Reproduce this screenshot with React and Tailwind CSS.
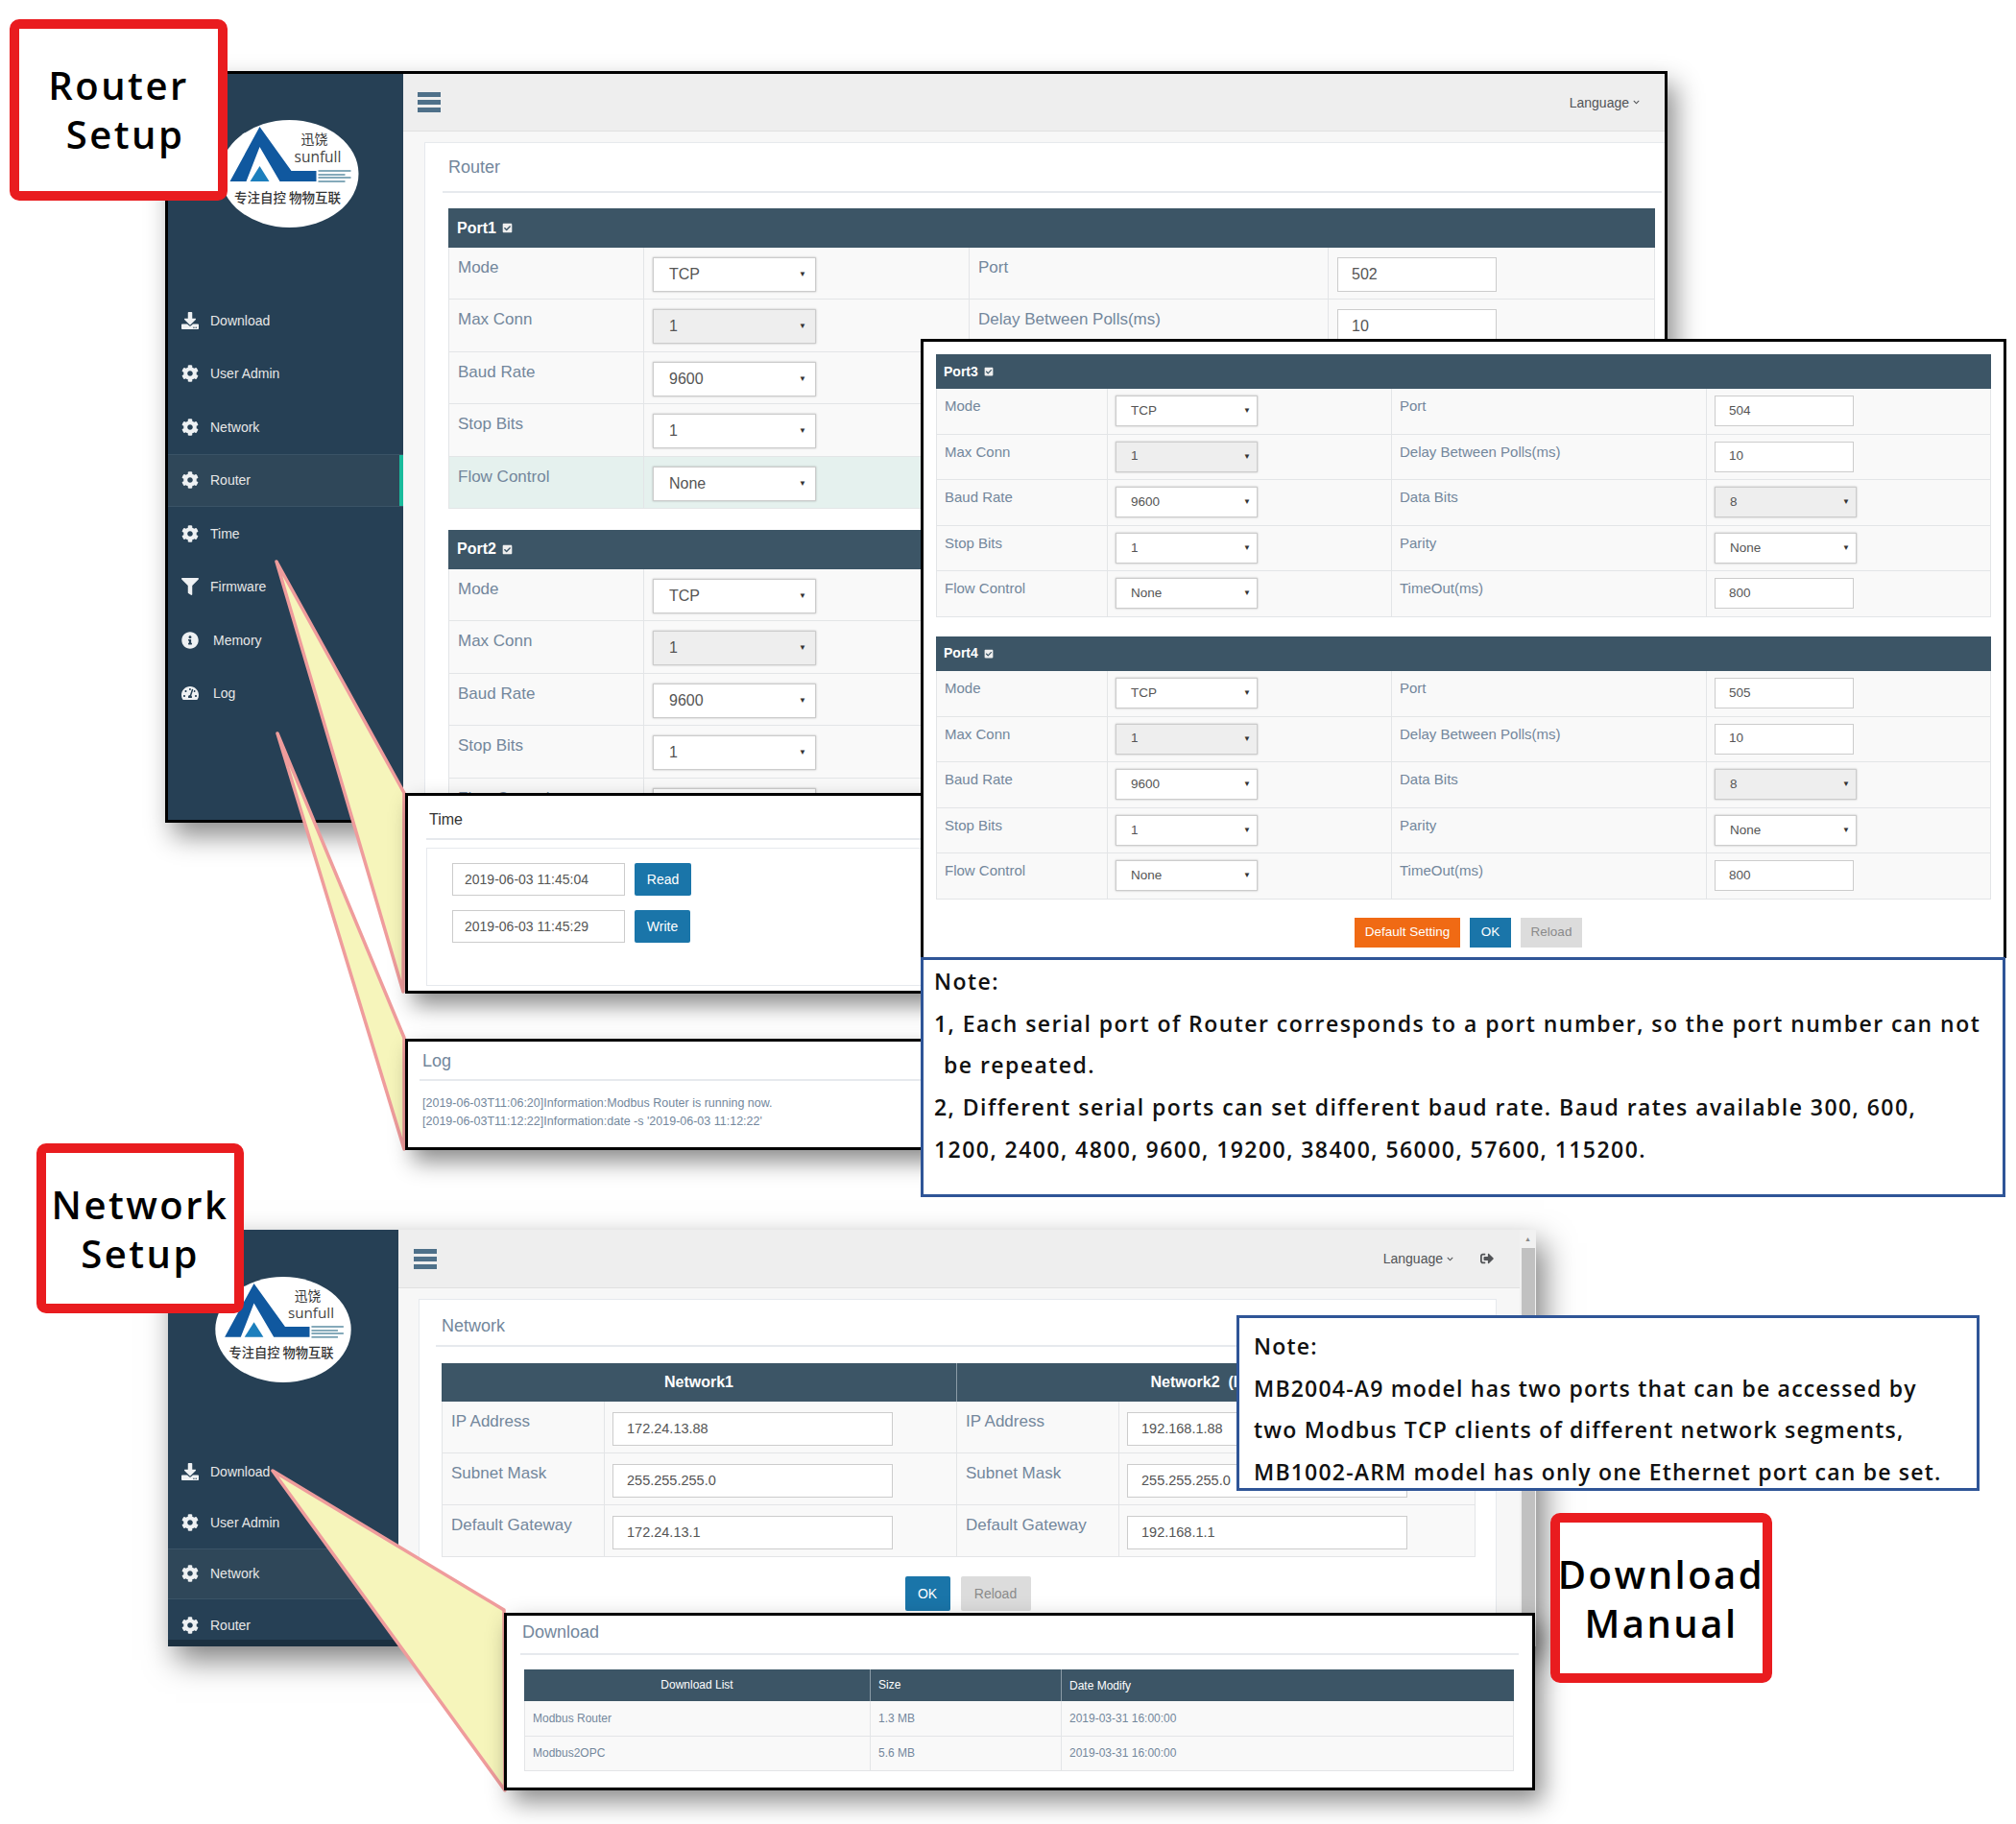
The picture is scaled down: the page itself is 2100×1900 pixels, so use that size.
import React from 'react';
import { FaBars, FaCheckSquare, FaChevronDown, FaCog, FaDownload, FaFilter, FaInfoCircle, FaSignOutAlt, FaTachometerAlt } from 'react-icons/fa';

const Logo = ({ className }) => (
  <svg viewBox="0 0 144 112" className={className}>
    <ellipse cx="72" cy="56" rx="72" ry="56" fill="#fff" />
    <polygon points="41,7 10,64 27,64 41,28 62,64 100,64 100,53 74,53" fill="#10589f" />
    <polygon points="41,48 31,64 51,64" fill="#1c7fbd" />
    <g stroke="#5d8ea3" strokeWidth="1.5">
      <line x1="102" y1="53" x2="136" y2="53" />
      <line x1="102" y1="57" x2="130" y2="57" />
      <line x1="102" y1="60" x2="136" y2="60" />
      <line x1="102" y1="64" x2="130" y2="64" />
    </g>
    <text x="98" y="25" textAnchor="middle" fontSize="14" fill="#333" style={{ fontFamily: '"Noto Sans CJK SC", serif' }}>迅饶</text>
    <text x="77" y="44" fontSize="15.5" fill="#444" style={{ fontFamily: '"Open Sans", sans-serif' }}>sunfull</text>
    <text x="70" y="86" textAnchor="middle" fontSize="13.5" fontWeight="500" fill="#333" style={{ fontFamily: '"Noto Sans CJK SC", sans-serif' }}>专注自控 物物互联</text>
  </svg>
);

const Hamburger = () => (
  <div className="flex flex-col gap-[3px] w-[24px]">
    <div className="h-[5px] bg-[#4e7089]" />
    <div className="h-[5px] bg-[#4e7089]" />
    <div className="h-[5px] bg-[#4e7089]" />
  </div>
);

const NavItem = ({ icon: Icon, children, active, tall, shift }) => (
  <div className={`flex items-center text-sm text-[#e7e7e7] relative ${tall ? 'h-[55.5px]' : 'h-[53.3px]'} ${active ? 'bg-[#2f4759] border-y border-[#3a5366]' : ''}`}>
    <div className="w-[44px] pl-[14px] flex items-center shrink-0">
      <Icon size={18} className="text-[#eef1f3]" />
    </div>
    <span className={shift ? 'ml-[3px]' : ''}>{children}</span>
    {active && tall && <div className="absolute right-0 top-0 bottom-0 w-[4px] bg-[#1abb9c]" />}
  </div>
);

const Callout = ({ points, className }) => (
  <svg className={`absolute left-0 top-0 ${className}`} width="2100" height="1900" viewBox="0 0 2100 1900">
    <polygon points={points} fill="#f6f5bb" stroke="#ef9c9c" strokeWidth="3.5" strokeLinejoin="round" />
  </svg>
);

const Label = ({ className, children }) => (
  <div className={`absolute bg-white border-[10px] border-[#e91c1f] rounded-[10px] flex flex-col items-center justify-center text-black font-semibold leading-[51px] text-[40px] tracking-[2.5px] ${className}`} style={{ fontFamily: '"Open Sans", sans-serif' }}>
    {children}
  </div>
);

const Select = ({ value, disabled, big }) => (
  <div className={`flex items-center justify-between border border-[#ccc] ${disabled ? 'bg-[#eee]' : 'bg-white'} ${big ? 'w-[170px] h-[36px] pl-[16px] pr-[9px] text-[16px] shadow-[0_0_2px_rgba(0,0,0,.25)]' : 'w-[148px] h-[32px] pl-[15px] pr-[6px] text-[13.5px] shadow-[0_0_2px_rgba(0,0,0,.25)]'} text-[#555]`}>
    <span>{value}</span>
    <span className="text-[8px] text-[#333]">▼</span>
  </div>
);

const Input = ({ value, big, className }) => (
  <div className={`flex items-center border border-[#ccc] bg-white text-[#555] ${big ? 'w-[166px] h-[36px] pl-[14px] text-[16px]' : 'w-[145px] h-[32px] pl-[14px] text-[13.5px]'} ${className || ''}`}>
    {value}
  </div>
);

const PortTable = ({ name, port, big, highlight }) => {
  const rows = [
    ['Mode', 'TCP', false, 'Port', port, 'input'],
    ['Max Conn', '1', true, 'Delay Between Polls(ms)', '10', 'input'],
    ['Baud Rate', '9600', false, 'Data Bits', '8', 'disabled'],
    ['Stop Bits', '1', false, 'Parity', 'None', 'select'],
    ['Flow Control', 'None', false, 'TimeOut(ms)', '800', 'input'],
  ];
  const grid = big ? 'grid grid-cols-[204px_339px_374px_340px]' : 'grid grid-cols-[179px_296px_328px_296px]';
  const cell = big ? 'pl-[9px] pt-[10px] border-b border-r border-[#e3e5e7]' : 'pl-[8px] pt-[7px] border-b border-r border-[#e3e5e7]';
  return (
    <div className={big ? 'w-[1257px]' : 'w-[1099px]'}>
      <div className={`flex items-center gap-[6px] bg-[#3c5566] text-white font-bold ${big ? 'h-[41px] pl-[9px] text-[16px]' : 'h-[36px] pl-[8px] text-[14px]'}`}>
        {name}
        <FaCheckSquare size={big ? 11 : 10} className="text-[#eee]" />
      </div>
      {rows.map((r, i) => (
        <div key={r[0]} className={`${grid} ${big ? 'h-[54.4px] text-[17px]' : 'h-[47.6px] text-[15px]'} ${highlight && r[0] === 'Flow Control' ? 'bg-[#e5f1ee]' : 'bg-[#f9f9f9]'} text-[#73879c]`}>
          <div className={`${cell} leading-[22px] border-l`}>{r[0]}</div>
          <div className={cell}><div className={big ? '' : '-mt-[0px]'}><Select value={r[1]} disabled={r[2]} big={big} /></div></div>
          <div className={`${cell} leading-[22px]`}>{r[3]}</div>
          <div className={cell}>
            {r[5] === 'input' ? <Input value={r[4]} big={big} /> : <Select value={r[4]} disabled={r[5] === 'disabled'} big={big} />}
          </div>
        </div>
      ))}
    </div>
  );
};

const NetRow = ({ label, a, b, c, d }) => (
  <div className="grid grid-cols-[170px_367px_169px_371px] h-[54px] bg-[#f9f9f9] text-[17px] text-[#73879c]">
    <div className="pl-[9px] pt-[8px] border-l border-r border-b border-[#e3e5e7]">{label}</div>
    <div className="pl-[8px] pt-[11px] border-r border-b border-[#e3e5e7]">
      <Input value={a} big className="!w-[292px] !h-[35px] !text-[14.5px]" />
    </div>
    <div className="pl-[9px] pt-[8px] border-r border-b border-[#e3e5e7]">{c}</div>
    <div className="pl-[8px] pt-[11px] border-r border-b border-[#e3e5e7]">
      <Input value={b} big className="!w-[292px] !h-[35px] !text-[14.5px]" />
    </div>
  </div>
);

const Btn = ({ className, children }) => (
  <div className={`flex items-center justify-center text-[14px] ${className}`}>{children}</div>
);

const panelTitle = 'text-[18px] text-[#73879c]';

const DownloadRow = ({ name, size }) => (
  <div className="grid grid-cols-[361px_199px_471px] h-[36.5px] items-center bg-[#f9f9f9] text-[12px] text-[#73879c] border-b border-[#e3e5e7]">
    <div className="pl-[8px] h-full flex items-center border-l border-r border-[#e3e5e7]">{name}</div>
    <div className="pl-[8px] h-full flex items-center border-r border-[#e3e5e7]">{size}</div>
    <div className="pl-[8px] h-full flex items-center border-r border-[#e3e5e7]">2019-03-31 16:00:00</div>
  </div>
);

export default function App() {
  return (
    <div className="relative w-[2100px] h-[1900px] bg-white overflow-hidden text-[#555]" style={{ fontFamily: '"Liberation Sans", Arial, sans-serif' }}>
      {/* Router window */}
      <div className="absolute left-[172px] top-[74px] w-[1565px] h-[783px] border-[3px] border-black flex overflow-hidden shadow-[8px_14px_26px_rgba(0,0,0,.45)] bg-[#f7f7f7]">
        <aside className="w-[245px] shrink-0 bg-[#264055] relative">
          <Logo className="absolute left-[53px] top-[48px] w-[147px] h-[112px]" />
          <nav className="pt-[229px]">
            <NavItem tall icon={FaDownload}>Download</NavItem>
            <NavItem tall icon={FaCog}>User Admin</NavItem>
            <NavItem tall icon={FaCog}>Network</NavItem>
            <NavItem tall icon={FaCog} active>Router</NavItem>
            <NavItem tall icon={FaCog}>Time</NavItem>
            <NavItem tall icon={FaFilter}>Firmware</NavItem>
            <NavItem tall icon={FaInfoCircle} shift>Memory</NavItem>
            <NavItem tall icon={FaTachometerAlt} shift>Log</NavItem>
          </nav>
        </aside>
        <main className="flex-1 min-w-0">
          <header className="h-[60px] bg-[#eeeeee] border-b border-[#e0e0e0] flex items-center justify-between pl-[15px] pr-[26px]">
            <Hamburger />
            <div className="flex items-center gap-[4px] text-sm text-[#515356]">Language <FaChevronDown size={7} /></div>
          </header>
          <div className="pt-[11px] pl-[22px]">
            <div className="bg-white border border-[#e6e9ed] pl-[24px] pb-[40px] w-[1300px]">
              <div className={`${panelTitle} h-[52px] pt-[12px] -ml-[6px] pl-[6px] border-b-2 border-[#e6e9ed] w-[1270px]`}>Router</div>
              <div className="pt-[16px]"><PortTable name="Port1" port="502" big highlight /></div>
              <div className="pt-[22px]"><PortTable name="Port2" port="503" big /></div>
            </div>
          </div>
        </main>
      </div>

      <Callout points="288,585 421,826 420,1033" />
      <Callout points="289,764 421,1081 421,1197" />

      {/* Time panel */}
      <div className="absolute left-[422px] top-[826px] w-[560px] h-[209px] border-[3px] border-black bg-white pt-[3px] pl-[19px] shadow-[8px_12px_22px_rgba(0,0,0,.45)]">
        <div className="h-[43px] text-[16px] text-[#333] pt-[10px] pl-[3px] border-b-2 border-[#e6e9ed]">Time</div>
        <div className="mt-[8px] h-[144px] border border-[#e6e9ed] pl-[26px] pt-[15px] flex flex-col gap-[15px]">
          <div className="flex gap-[10px]">
            <Input value="2019-06-03 11:45:04" className="!w-[180px] !h-[34px] !text-[14px] !pl-[12px]" />
            <Btn className="w-[59px] h-[34px] bg-[#1a75a9] text-white rounded-[2px]">Read</Btn>
          </div>
          <div className="flex gap-[10px]">
            <Input value="2019-06-03 11:45:29" className="!w-[180px] !h-[34px] !text-[14px] !pl-[12px]" />
            <Btn className="w-[58px] h-[34px] bg-[#1a75a9] text-white rounded-[2px]">Write</Btn>
          </div>
        </div>
      </div>

      {/* Log panel */}
      <div className="absolute left-[422px] top-[1082px] w-[560px] h-[116px] border-[3px] border-black bg-white pl-[12px] shadow-[8px_12px_22px_rgba(0,0,0,.45)]">
        <div className={`${panelTitle} h-[41px] pt-[7px] pl-[3px] border-b-2 border-[#e6e9ed]`}>Log</div>
        <div className="pt-[14px] pl-[3px] text-[12.5px] leading-[19px] text-[#73879c] whitespace-nowrap">
          <div>[2019-06-03T11:06:20]Information:Modbus Router is running now.</div>
          <div>[2019-06-03T11:12:22]Information:date -s '2019-06-03 11:12:22'</div>
        </div>
      </div>

      {/* Port3 and Port4 overlay */}
      <div className="absolute left-[959px] top-[353px] w-[1131px] h-[645px] border-[3px] border-b-0 border-black bg-white pl-[13px] pt-[13px]">
        <PortTable name="Port3" port="504" />
        <div className="pt-[20px]"><PortTable name="Port4" port="505" /></div>
        <div className="flex justify-center gap-[10px] pt-[19px] pr-[3px]">
          <Btn className="w-[110px] h-[31px] bg-[#f06a14] text-white !text-[13.5px]">Default Setting</Btn>
          <Btn className="w-[43px] h-[31px] bg-[#1a75a9] text-white !text-[13.5px]">OK</Btn>
          <Btn className="w-[64px] h-[31px] bg-[#dcdcdc] text-[#8a8a8a] !text-[13.5px]">Reload</Btn>
        </div>
      </div>

      {/* Note */}
      <div className="absolute left-[959px] top-[997px] w-[1130px] h-[250px] border-[3px] border-[#2f5597] bg-white pl-[11px] pt-[1px] text-[23px] font-semibold leading-[43.7px] tracking-[1.45px] text-[#111] whitespace-nowrap" style={{ fontFamily: '"Open Sans", sans-serif' }}>
        <div>Note:</div>
        <div>1, Each serial port of Router corresponds to a port number, so the port number can not</div>
        <div className="pl-[10px]">be repeated.</div>
        <div>2, Different serial ports can set different baud rate. Baud rates available 300, 600,</div>
        <div>1200, 2400, 4800, 9600, 19200, 38400, 56000, 57600, 115200.</div>
      </div>

      {/* Network window */}
      <div className="absolute left-[175px] top-[1281px] w-[1425px] h-[434px] flex overflow-hidden shadow-[8px_14px_30px_rgba(0,0,0,.5)] bg-[#f7f7f7]">
        <aside className="w-[240px] shrink-0 bg-[#264055] relative border-b-[7px] border-[#1b3040]">
          <Logo className="absolute left-[48px] top-[49px] w-[144px] h-[110px]" />
          <nav className="pt-[225px]">
            <NavItem icon={FaDownload}>Download</NavItem>
            <NavItem icon={FaCog}>User Admin</NavItem>
            <NavItem icon={FaCog} active>Network</NavItem>
            <NavItem icon={FaCog}>Router</NavItem>
          </nav>
        </aside>
        <main className="flex-1 min-w-0 flex">
          <div className="flex-1 min-w-0">
            <header className="h-[61px] bg-[#eeeeee] border-b border-[#e0e0e0] flex items-center pl-[16px] pr-[27px]">
              <Hamburger />
              <div className="ml-auto flex items-center gap-[4px] text-sm text-[#515356]">Language <FaChevronDown size={7} /></div>
              <FaSignOutAlt size={14} className="ml-[28px] text-[#515356]" />
            </header>
            <div className="pt-[11px] pl-[21px]">
              <div className="bg-white border border-[#e6e9ed] w-[1123px] pl-[23px] pb-[20px]">
                <div className={`${panelTitle} h-[49px] pt-[14px] border-b-2 border-[#e6e9ed] -ml-[6px] pl-[6px] w-[1085px]`}>Network</div>
                <div className="pt-[17px] w-[1077px]">
                  <div className="grid grid-cols-[537px_540px] h-[40px] bg-[#3c5566] text-white text-[16px] font-bold text-center leading-[40px]">
                    <div className="border-r border-[#8b9ba6]">Network1</div>
                    <div>Network2 &nbsp;(DHCP)</div>
                  </div>
                  <NetRow label="IP Address" a="172.24.13.88" c="IP Address" b="192.168.1.88" />
                  <NetRow label="Subnet Mask" a="255.255.255.0" c="Subnet Mask" b="255.255.255.0" />
                  <NetRow label="Default Gateway" a="172.24.13.1" c="Default Gateway" b="192.168.1.1" />
                </div>
                <div className="flex justify-center gap-[11px] pt-[20px] pr-[2px]">
                  <Btn className="w-[47px] h-[36px] bg-[#1a75a9] text-white rounded-[2px]">OK</Btn>
                  <Btn className="w-[73px] h-[36px] bg-[#dcdcdc] text-[#8a8a8a] rounded-[2px]">Reload</Btn>
                </div>
              </div>
            </div>
          </div>
          <div className="w-[17px] shrink-0 bg-[#f1f1f1] flex flex-col items-center">
            <span className="h-[19px] text-[7px] leading-[19px] text-[#888]">▲</span>
            <div className="w-[14px] flex-1 bg-[#c1c1c1]" />
          </div>
        </main>
      </div>

      <Callout points="284,1532 525,1677 526,1865" />

      {/* Download panel */}
      <div className="absolute left-[525px] top-[1680px] w-[1074px] h-[185px] border-[3px] border-black bg-white pl-[15px] shadow-[8px_12px_24px_rgba(0,0,0,.45)]">
        <div className={`${panelTitle} h-[41px] pt-[4px] pl-[2px] border-b-2 border-[#e6e9ed] w-[1040px] -ml-[1px]`}>Download</div>
        <div className="pt-[15px] pl-[3px] w-[1034px]">
          <div className="grid grid-cols-[361px_199px_471px] h-[33px] bg-[#3c5566] text-white text-[12px] items-center">
            <div className="text-center h-full leading-[33px] border-r border-[#8b9ba6]">Download List</div>
            <div className="pl-[8px] h-full leading-[33px] border-r border-[#8b9ba6]">Size</div>
            <div className="pl-[8px]">Date Modify</div>
          </div>
          <DownloadRow name="Modbus Router" size="1.3 MB" />
          <DownloadRow name="Modbus2OPC" size="5.6 MB" />
        </div>
      </div>

      {/* Network note */}
      <div className="absolute left-[1288px] top-[1370px] w-[774px] h-[183px] border-[3px] border-[#2f5597] bg-white pl-[15px] pt-[8px] text-[23px] font-semibold leading-[43.7px] tracking-[1.2px] text-[#111] whitespace-nowrap" style={{ fontFamily: '"Open Sans", sans-serif' }}>
        <div>Note:</div>
        <div>MB2004-A9 model has two ports that can be accessed by</div>
        <div>two Modbus TCP clients of different network segments,</div>
        <div>MB1002-ARM model has only one Ethernet port can be set.</div>
      </div>

      <Label className="left-[10px] top-[20px] w-[227px] h-[189px] !pb-[2px]"><span>Router</span><span className="pl-[14px]">Setup</span></Label>
      <Label className="left-[38px] top-[1191px] w-[216px] h-[177px]"><span>Network</span><span>Setup</span></Label>
      <Label className="left-[1615px] top-[1576px] w-[231px] h-[177px]"><span>Download</span><span>Manual</span></Label>
    </div>
  );
}
